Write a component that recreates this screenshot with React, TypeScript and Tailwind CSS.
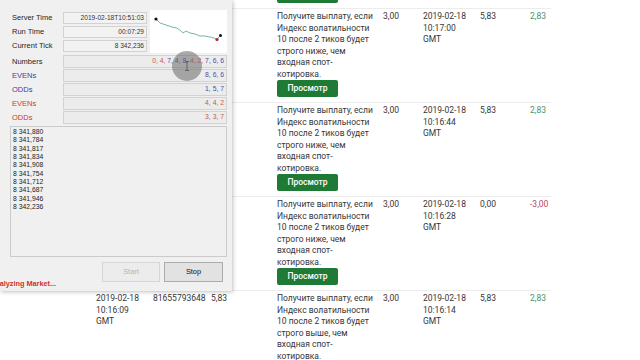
import React from "react";

type Row = {
  left: string[];
  ref: string;
  buy: string;
  dir: string;
  time: string;
  payout: string;
  profit: string;
  win: boolean;
  button: boolean;
};

// only the last row's left columns show from under the bot window
const rows: Row[] = [
  { left: [], ref: "", buy: "", dir: "ниже", time: "10:17:16", payout: "5,83", profit: "2,83", win: true, button: true },
  { left: [], ref: "", buy: "", dir: "ниже", time: "10:17:00", payout: "5,83", profit: "2,83", win: true, button: true },
  { left: [], ref: "", buy: "", dir: "ниже", time: "10:16:44", payout: "5,83", profit: "2,83", win: true, button: true },
  { left: [], ref: "", buy: "", dir: "ниже", time: "10:16:28", payout: "0,00", profit: "-3,00", win: false, button: true },
  { left: ["2019-02-18", "10:16:09", "GMT"], ref: "81655793648", buy: "5,83", dir: "выше", time: "10:16:14", payout: "5,83", profit: "2,83", win: true, button: false },
];

const ticks = ["8 341,880", "8 341,784", "8 341,817", "8 341,834", "8 341,908", "8 341,754", "8 341,712", "8 341,687", "8 341,946", "8 342,236"];

const numbers: [string, string][] = [
  ["0", "r"], ["4", "r"], ["7", "b"], ["4", "b"], ["8", "b"], ["4", "r"], ["2", "r"], ["7", "b"], ["6", "b"], ["6", "b"],
];

function TableRow({ r }: { r: Row }) {
  return (
    <div className="flex border-t border-[#ececec] pt-[2px] pb-[5px] pl-[10px] pr-[6px] leading-[11.5px] text-[8.5px] text-[#363636]">
      <div className="w-[57px]">
        {r.left.map((l) => (
          <div key={l}>{l}</div>
        ))}
      </div>
      <div className="w-[58px]">{r.ref}</div>
      <div className="w-[66px]">{r.buy}</div>
      <div className="w-[106px]">
        <div>Получите выплату, если</div>
        <div>Индекс волатильности</div>
        <div>10 после 2 тиков будет</div>
        <div>строго {r.dir}, чем</div>
        <div>входная спот-</div>
        <div>котировка.</div>
        {r.button ? (
          <div className="flex h-[17px] w-[61px] items-center justify-center rounded-[2px] bg-[#1f7a36] text-[8.5px] font-medium text-white">
            Просмотр
          </div>
        ) : null}
      </div>
      <div className="w-[40px]">3,00</div>
      <div className="w-[57px]">
        <div>2019-02-18</div>
        <div>{r.time}</div>
        <div>GMT</div>
      </div>
      <div className="w-[50px]">{r.payout}</div>
      <div className={`w-[15px] text-right ${r.win ? "text-[#4f9263]" : "text-[#c0455a]"}`}>{r.profit}</div>
    </div>
  );
}

function Box({ children, className = "" }: { children?: React.ReactNode; className?: string }) {
  return (
    <div className={`flex items-center justify-end border border-[#d2d2d2] bg-[#ececec] pr-[2px] ${className}`}>
      {children}
    </div>
  );
}

function Panel() {
  return (
    <div
      className="absolute left-0 top-0 flex h-[291px] w-[232px] flex-col bg-[#f0f0f0] shadow-[1px_1px_4px_rgba(0,0,0,0.25)]"
      style={{ fontFamily: '"Liberation Sans", Arial, sans-serif' }}
    >
      <div className="flex items-start pt-[10px]">
        <div className="mt-[2px] flex flex-col gap-[2px] pl-[12px]">
          {[
            ["Server Time", "2019-02-18T10:51:03"],
            ["Run Time", "00:07:29"],
            ["Current Tick", "8 342,236"],
          ].map(([l, v]) => (
            <div key={l} className="flex h-[12px] items-center">
              <div className="w-[51px] text-[7.5px] text-[#1e1e1e]">{l}</div>
              <Box className="h-[12px] w-[84px] bg-[#f2f2f2] text-[6.6px] text-[#333]">{v}</Box>
            </div>
          ))}
        </div>
        <div className="ml-[3px] h-[43px] w-[77px] bg-white">
          <svg width="77" height="43" viewBox="0 0 77 43">
            <polyline
              points="6,9 10,13 16,15 22,17 27,18 31,21 33,23 36,21 40,23 45,24 50,26 55,26 60,27 64,28 67,29.5 70,25.5"
              fill="none"
              stroke="#6aa9a6"
              strokeWidth="0.9"
            />
            <circle cx="6" cy="9" r="1.6" fill="#111" />
            <circle cx="67" cy="29.5" r="1.6" fill="#b3262c" />
            <circle cx="70.5" cy="25.5" r="1.5" fill="#111" />
          </svg>
        </div>
      </div>

      <div className="relative mt-[2px] flex flex-col gap-[1px] pl-[12px]">
        <div className="flex h-[13px] items-center">
          <div className="w-[51px] text-[7.5px] text-[#1e1e1e]">Numbers</div>
          <Box className="h-[13px] w-[164px] text-[6.8px]">
            {numbers.map(([n, c], i) => (
              <span key={i} className={`whitespace-pre ${c === "r" ? "text-[#c65a50]" : "text-[#4a4fa8]"}`}>
                {n}
                {i < numbers.length - 1 ? ", " : ""}
              </span>
            ))}
          </Box>
        </div>
        {[
          ["EVENs", "8, 6, 6", "b"],
          ["ODDs", "1, 5, 7", "b"],
          ["EVENs", "4, 4, 2", "r"],
          ["ODDs", "3, 3, 7", "r"],
        ].map(([l, v, c], i) => (
          <div key={i} className="flex h-[13px] items-center">
            <div className={`w-[51px] text-[7.5px] ${c === "r" ? "text-[#cf3a2a]" : "text-[#3a3fa6]"}`}>{l}</div>
            <Box className={`h-[13px] w-[164px] text-[6.8px] ${c === "r" ? "text-[#c65a50]" : "text-[#4a4fa8]"}`}>{v}</Box>
          </div>
        ))}
        <div className="absolute left-[172px] top-[-4px] flex h-[30px] w-[30px] items-center justify-center rounded-full bg-[rgba(105,105,105,0.55)]">
          <svg width="6" height="10" viewBox="0 0 6 10">
            <path d="M1 0.5h4M3 0.5v9M1 9.5h4" stroke="#555" strokeWidth="0.8" fill="none" />
          </svg>
        </div>
      </div>

      <div className="ml-[10px] mt-[2px] flex h-[131px] w-[217px] flex-col border border-[#cbcbcb] bg-[#f0f0f0] pl-[2px] pt-[1px]">
        {ticks.map((t, i) => (
          <div key={i} className="h-[8.33px] text-[6.8px] leading-[8.33px] text-[#222]">
            {t}
          </div>
        ))}
      </div>

      <div className="mt-[5px] flex h-[20px] gap-[4px] pl-[102px]">
        <div className="flex w-[58px] items-center justify-center border border-[#d6d6d6] bg-[#ececec] text-[7.4px] text-[#b4b4b4]">
          Start
        </div>
        <div className="flex w-[59px] items-center justify-center border border-[#acacac] bg-[#e2e2e2] text-[7.4px] text-[#111]">
          Stop
        </div>
      </div>
      <div className="-mt-[2px] ml-[-10px] h-[8px] text-[7.3px] font-bold leading-[8px] text-[#d0302a]">
        Analyzing Market...
      </div>
    </div>
  );
}

export default function App() {
  return (
    <div className="relative h-[360px] w-[640px] overflow-hidden bg-white" style={{ fontFamily: "Roboto, sans-serif" }}>
      <div className="-mt-[86px] ml-[86px] w-[465px]">
        {rows.map((r, i) => (
          <TableRow key={i} r={r} />
        ))}
      </div>
      <Panel />
    </div>
  );
}
